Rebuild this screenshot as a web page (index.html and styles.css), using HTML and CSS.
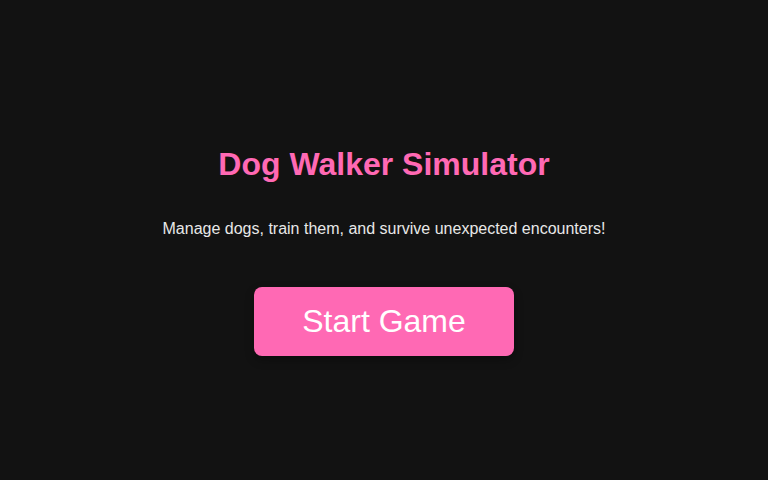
FILE: index.html
```html
<!DOCTYPE html>
<html lang="en">
<head>
    <meta charset="UTF-8">
    <meta name="viewport" content="width=device-width, initial-scale=1.0">
    <title>Dog Walker Simulator</title>
    <link rel="stylesheet" href="styles.css">
</head>
<body>
    <div class="start-screen">
        <h1 class="title">Dog Walker Simulator</h1>
        <p class="tagline">Manage dogs, train them, and survive unexpected encounters!</p>
        <button class="start-btn">Start Game</button>
    </div>
</body>
</html>
```

FILE: styles.css
```css
body {
    margin: 0;
    background-color: #121212;
    color: #e8e8e8;
    font-family: "Liberation Sans", Arial, sans-serif;
}
.start-screen {
    height: 100vh;
    display: flex;
    flex-direction: column;
    align-items: center;
    justify-content: center;
    text-align: center;
}
.title {
    font-size: 32px;
    margin: 21px 0;
    color: #ff69b4;
}
.tagline {
    font-size: 16px;
    margin: 16px 0;
}
.start-btn {
    margin-top: 33px;
    padding: 16px 48px;
    font-family: inherit;
    font-size: 32px;
    color: #fff;
    background-color: #ff69b4;
    border: none;
    border-radius: 8px;
    cursor: pointer;
    box-shadow: 0 4px 10px rgba(0,0,0,0.3);
}
.start-btn:hover {
    opacity: 0.9;
}
```
